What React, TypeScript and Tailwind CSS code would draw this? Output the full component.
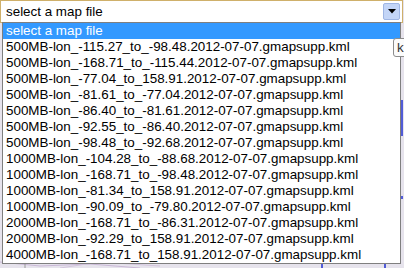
import React from "react"

const files = [
  "500MB-lon_-115.27_to_-98.48.2012-07-07.gmapsupp.kml",
  "500MB-lon_-168.71_to_-115.44.2012-07-07.gmapsupp.kml",
  "500MB-lon_-77.04_to_158.91.2012-07-07.gmapsupp.kml",
  "500MB-lon_-81.61_to_-77.04.2012-07-07.gmapsupp.kml",
  "500MB-lon_-86.40_to_-81.61.2012-07-07.gmapsupp.kml",
  "500MB-lon_-92.55_to_-86.40.2012-07-07.gmapsupp.kml",
  "500MB-lon_-98.48_to_-92.68.2012-07-07.gmapsupp.kml",
  "1000MB-lon_-104.28_to_-88.68.2012-07-07.gmapsupp.kml",
  "1000MB-lon_-168.71_to_-98.48.2012-07-07.gmapsupp.kml",
  "1000MB-lon_-81.34_to_158.91.2012-07-07.gmapsupp.kml",
  "1000MB-lon_-90.09_to_-79.80.2012-07-07.gmapsupp.kml",
  "2000MB-lon_-168.71_to_-86.31.2012-07-07.gmapsupp.kml",
  "2000MB-lon_-92.29_to_158.91.2012-07-07.gmapsupp.kml",
  "4000MB-lon_-168.71_to_158.91.2012-07-07.gmapsupp.kml",
]

function MapBackdrop() {
  return (
    <svg className="absolute inset-0" width="404" height="268" viewBox="0 0 404 268">
      <rect width="404" height="268" fill="#e6e3ec" />
      <path d="M0 262 L40 266 L90 264 L140 268" stroke="#c9b8d6" strokeWidth="1" fill="none" />
      <path d="M60 268 L100 262 L160 266" stroke="#d3c5dd" strokeWidth="1" fill="none" />
      <line x1="402" y1="100" x2="402" y2="136" stroke="#1f2fd0" strokeWidth="1.5" />
      <line x1="402" y1="196" x2="402" y2="199" stroke="#1f2fd0" strokeWidth="1.5" />
      <line x1="322" y1="263" x2="322" y2="268" stroke="#1f2fd0" strokeWidth="1.5" />
      <line x1="385" y1="263" x2="385" y2="268" stroke="#1f2fd0" strokeWidth="1.5" />
      <line x1="25" y1="263" x2="25" y2="268" stroke="#9a9a9a" strokeWidth="1" />
    </svg>
  )
}

export default function App() {
  return (
    <div
      className="relative w-[404px] h-[268px] overflow-hidden text-[13.4px] leading-[16px] text-black"
      style={{ fontFamily: '"Liberation Sans", Arial, sans-serif' }}
    >
      <MapBackdrop />

      <div className="relative flex items-center h-[23px] w-[403px] bg-white border border-[#cfb06a] pl-[5px] pr-[2px]">
        <span className="flex-1">select a map file</span>
        <div className="flex items-center justify-center w-[17px] h-[17px] bg-[#c3d5f7] border border-[#9fb6e4] rounded-[2px]">
          <svg width="8" height="5" viewBox="0 0 8 5">
            <path d="M0 0 H8 L4 4.5 Z" fill="#000" />
          </svg>
        </div>
      </div>

      <ul className="absolute left-[2px] top-[22px] w-[399px] bg-white border border-[#7f7f7f]">
        <li className="h-[16px] pl-[3px] bg-[#3399ff] text-white">select a map file</li>
        {files.map((f) => (
          <li key={f} className="h-[16px] pl-[3px] whitespace-nowrap">
            {f}
          </li>
        ))}
      </ul>

      <div className="absolute left-[393px] top-[38px] h-[19px] w-[20px] bg-[#fbfbfb] border border-[#8c8c8c] rounded-[3px] pl-[3px] pt-[1px] text-[#333]">
        k
      </div>
    </div>
  )
}
